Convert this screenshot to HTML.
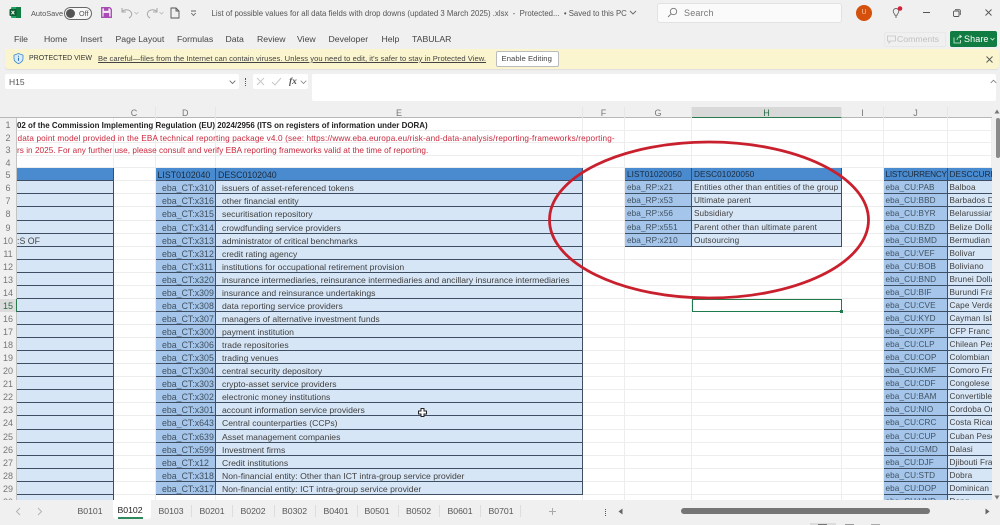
<!DOCTYPE html>
<html><head><meta charset="utf-8"><style>
*{box-sizing:border-box;margin:0;padding:0}
html,body{width:1000px;height:525px;overflow:hidden;background:#f0f0f0;font-family:"Liberation Sans",sans-serif}
#p{position:relative;width:1000px;height:525px;overflow:hidden;background:#f0f0f0;filter:blur(.35px)}
.t{position:absolute;white-space:nowrap;font-size:8.7px;color:#444;line-height:12px}
.box{position:absolute;background:#fff}
#ch{position:absolute;left:0;top:107px;width:991.5px;height:11.3px;background:#f0f0f0;border-bottom:1px solid #b8b8b8}
#ch span{position:absolute;top:0;height:11px;font-size:9px;line-height:12px;text-align:center;color:#777;border-right:1px solid #e6e6e6}
#sheet{position:absolute;left:0;top:118.3px;width:991.5px;height:382px;overflow:hidden;background:#fff}
.r{display:grid;grid-template-columns:17px 96.5px 42px 60.5px 367px 42px 67px 150px 42px 64px 43.5px;height:13.07px}
.r.s{height:12.5px}
.r>*{font-style:normal;text-decoration:none;display:block;overflow:hidden;white-space:nowrap;font-size:8.8px;line-height:14px;color:#444;border-right:1px solid #ededed;border-bottom:1px solid #ededed}
.r>u{background:#f0f0f0;text-align:center;color:#777;font-size:9px;border-right:1px solid #c4c4c4;border-bottom:0}
.r>.l{background:#d7e6f6;border-right:1px solid #3f4f63;border-bottom:1px solid #3f4f63}
.r>.d{background:#a5c6ea;border-right:1px solid #3f4f63;border-bottom:1px solid #3f4f63;padding-left:6.5px;color:#405060}
.r>.e{background:#d7e6f6;border-right:1px solid #3f4f63;border-bottom:1px solid #3f4f63;padding-left:6px;color:#404040;font-size:8.65px}
.r>.h{background:#4a8bd0;border-right:1px solid #3f4f63;border-bottom:1px solid #3f4f63;padding-left:2px;color:#1c2a3a}
.r>.g{padding-left:2px;font-size:8.2px;letter-spacing:.1px}
.r>.k{padding-left:1.5px;font-size:8.2px;letter-spacing:.1px;border-right:0}
.r>.h.j{padding-left:1.5px;letter-spacing:-.2px}
.r>.j{padding-left:1.5px}
.tab{position:absolute;top:504px;font-size:8.7px;line-height:14px;color:#555;width:40px;text-align:center}
svg{position:absolute;overflow:visible}
</style></head><body><div id="p">

<!-- title bar -->
<svg style="left:9px;top:6px" width="13" height="13" viewBox="0 0 13 13"><rect x="2" y="1" width="10" height="11" rx="1" fill="#21a366"/><rect x="7" y="1" width="5" height="11" fill="#107c41"/><rect x="0.5" y="3" width="7" height="7" rx="1" fill="#0e5c2f"/><path d="M2.4 4.8l3 3.5M5.4 4.8l-3 3.5" stroke="#fff" stroke-width="1"/></svg>
<div class="t" style="left:31px;top:7.5px;font-size:7.4px;color:#555">AutoSave</div>
<div style="position:absolute;left:64px;top:6.5px;width:28px;height:13px;border:1px solid #666;border-radius:7px;background:#f7f7f7"></div>
<div style="position:absolute;left:66px;top:8.5px;width:9px;height:9px;border-radius:50%;background:#555"></div>
<div class="t" style="left:79px;top:7.5px;font-size:7.2px;color:#555">Off</div>
<svg style="left:101px;top:7px" width="11" height="11" viewBox="0 0 11 11"><path d="M.7.7h8l1.6 1.6v8H.7z" fill="#f3e5f5" stroke="#a94bb5" stroke-width="1.3"/><rect x="3" y="1" width="4.4" height="2.8" fill="#a94bb5"/><rect x="2.6" y="6" width="5.6" height="4" fill="#a94bb5"/></svg>
<svg style="left:120px;top:7px" width="14" height="12" viewBox="0 0 14 12" fill="none" stroke="#aaa" stroke-width="1.1"><path d="M2 1v4h4M2 5c2-3 8-3 9.500 1 .6 2-.6 4-2.500 5"/></svg>
<svg style="left:134px;top:11px" width="5" height="4" viewBox="0 0 5 4"><path d="M.5 1l2 2 2-2" fill="none" stroke="#bbb" stroke-width=".8"/></svg>
<svg style="left:145px;top:7px" width="14" height="12" viewBox="0 0 14 12" fill="none" stroke="#aaa" stroke-width="1.1"><path d="M12 1v4H8M12 5C10 2 4 2 2.500 6c-.6 2 .6 4 2.500 5"/></svg>
<svg style="left:159px;top:11px" width="5" height="4" viewBox="0 0 5 4"><path d="M.5 1l2 2 2-2" fill="none" stroke="#bbb" stroke-width=".8"/></svg>
<svg style="left:170px;top:7px" width="10" height="12" viewBox="0 0 10 12" fill="none" stroke="#555" stroke-width=".9"><path d="M1 1h5l3 3v7H1zM6 1v3h3"/></svg>
<svg style="left:190px;top:10px" width="7" height="7" viewBox="0 0 7 7" fill="none" stroke="#666" stroke-width=".9"><path d="M1 1h5M1.300 3l2.200 2.500L5.700 3"/></svg>
<div class="t" style="left:211.500px;top:7.500px;font-size:7.8px;color:#555">List of possible values for all data fields with drop downs (updated 3 March 2025) .xlsx&nbsp; -&nbsp; Protected...&nbsp; • Saved to this PC</div>
<svg style="left:629px;top:10px" width="8" height="6" viewBox="0 0 8 6"><path d="M1 1l3 3 3-3" fill="none" stroke="#666" stroke-width=".9"/></svg>

<div class="box" style="left:657px;top:3px;width:185px;height:20px;border:1px solid #e2e2e2;border-radius:3px;background:#fafafa"></div>
<svg style="left:667px;top:7px" width="11" height="11" viewBox="0 0 11 11" fill="none" stroke="#777" stroke-width=".9"><circle cx="6.500" cy="4.500" r="3.200"/><path d="M4.200 6.800L1 10"/></svg>
<div class="t" style="left:684px;top:6.500px;font-size:9px;color:#777;letter-spacing:.2px">Search</div>
<div style="position:absolute;left:856px;top:5px;width:16px;height:16px;border-radius:50%;background:#d4500c;color:#f6c8a8;font-size:7px;line-height:16px;text-align:center">U</div>
<svg style="left:890px;top:6px" width="14" height="14" viewBox="0 0 14 14" fill="none" stroke="#666" stroke-width=".9"><path d="M5 11h2M5 9.300h2c0-1.500 1.800-2 1.800-4a2.800 2.800 0 0 0-5.600 0c0 2 1.800 2.500 1.800 4z"/><circle cx="10" cy="2.500" r="2.300" fill="#d6203a" stroke="none"/></svg>
<div style="position:absolute;left:923px;top:12px;width:7px;height:1px;background:#555"></div>
<svg style="left:953px;top:9px" width="8" height="8" viewBox="0 0 8 8" fill="none" stroke="#555" stroke-width=".9"><rect x=".5" y="2" width="5.500" height="5.500" rx="1"/><path d="M2 .7h4.300c.6 0 1 .4 1 1V6"/></svg>
<svg style="left:985px;top:9px" width="7" height="7" viewBox="0 0 7 7"><path d="M.5.5l6 6M6.500.5l-6 6" stroke="#555" stroke-width=".9"/></svg>

<!-- menu -->
<div class="t" style="left:14px;top:33px">File</div>
<div class="t" style="left:44px;top:33px">Home</div>
<div class="t" style="left:80.500px;top:33px">Insert</div>
<div class="t" style="left:115.500px;top:33px">Page Layout</div>
<div class="t" style="left:177px;top:33px">Formulas</div>
<div class="t" style="left:225.500px;top:33px">Data</div>
<div class="t" style="left:257px;top:33px">Review</div>
<div class="t" style="left:297px;top:33px">View</div>
<div class="t" style="left:328.500px;top:33px">Developer</div>
<div class="t" style="left:381.500px;top:33px">Help</div>
<div class="t" style="left:412px;top:33px">TABULAR</div>
<div style="position:absolute;left:884px;top:32px;width:62px;height:15px;border:1px solid #e8e8e8;border-radius:2px"></div>
<svg style="left:887px;top:35px" width="9" height="9" viewBox="0 0 9 9"><path d="M.5 1h8v5H3.500L2 8V6H.5z" fill="none" stroke="#c4c4c4" stroke-width=".8"/></svg>
<div class="t" style="left:897px;top:33px;color:#c0c0c0">Comments</div>
<div style="position:absolute;left:950px;top:31px;width:47px;height:16px;background:#107c41;border-radius:2px"></div>
<svg style="left:953px;top:34px" width="10" height="10" viewBox="0 0 10 10" fill="none" stroke="#d8efe2" stroke-width=".8"><path d="M1 3.500V9h6.500V6M4 6c0-2 1.500-3.500 4-3.500M6.500 1L8.500 2.500 6.500 4"/></svg>
<div class="t" style="left:964px;top:33px;color:#fff;font-size:9px;letter-spacing:.1px">Share</div>
<svg style="left:990px;top:37px" width="5" height="4" viewBox="0 0 5 4"><path d="M.5 1l2 2 2-2" fill="none" stroke="#e4f3ea" stroke-width=".8"/></svg>

<!-- protected view -->
<div style="position:absolute;left:5px;top:49px;width:994px;height:20px;background:#fbf5cf;border-radius:3px;box-shadow:0 1px 1px #ddd"></div>
<svg style="left:13px;top:53px" width="11" height="11" viewBox="0 0 11 11"><path d="M5.500.5l4.500 1.600v3.500c0 2.500-2 4-4.500 5-2.500-1-4.500-2.500-4.500-5V2.100z" fill="#d9ecfa" stroke="#3a86c8" stroke-width=".8"/><path d="M5.500 2.800v.9M5.500 4.800v3" stroke="#2a6da8" stroke-width="1"/></svg>
<div class="t" style="left:29px;top:53px;font-size:7px;color:#333">PROTECTED VIEW</div>
<div class="t" style="left:98px;top:53px;font-size:7.6px;color:#444;text-decoration:underline;letter-spacing:.04px">Be careful—files from the Internet can contain viruses. Unless you need to edit, it's safer to stay in Protected View.</div>
<div style="position:absolute;left:496px;top:50.500px;width:63px;height:16px;background:#fff;border:1px solid #bbb;border-radius:2px"></div>
<div class="t" style="left:501.500px;top:53px;font-size:7.7px;color:#444;letter-spacing:.06px">Enable Editing</div>
<svg style="left:986px;top:56px" width="7" height="7" viewBox="0 0 7 7"><path d="M.5.5l6 6M6.500.5l-6 6" stroke="#555" stroke-width=".9"/></svg>

<!-- formula bar -->
<div class="box" style="left:5px;top:74px;width:234px;height:15px;border-radius:2px"></div>
<div class="t" style="left:9px;top:76px;font-size:8.500px;color:#555">H15</div>
<svg style="left:229px;top:80px" width="7" height="5" viewBox="0 0 7 5"><path d="M.7.7l2.800 2.800L6.300.7" fill="none" stroke="#666" stroke-width=".8"/></svg>
<div style="position:absolute;left:245px;top:78px;width:1.500px;height:8px;border-left:1.500px dotted #555"></div>
<div class="box" style="left:253px;top:74px;width:55px;height:15px;border-radius:2px"></div>
<svg style="left:256px;top:77px" width="9" height="9" viewBox="0 0 9 9"><path d="M1 1l7 7M8 1L1 8" stroke="#c8c8c8"/></svg>
<svg style="left:271px;top:77px" width="11" height="9" viewBox="0 0 11 9"><path d="M1 5l3 3 6-7" fill="none" stroke="#c8c8c8"/></svg>
<div class="t" style="left:289px;top:75.500px;font:italic bold 9.500px/12px 'Liberation Serif',serif;color:#555">fx</div>
<svg style="left:300px;top:80px" width="7" height="5" viewBox="0 0 7 5"><path d="M.7.7l2.800 2.800L6.300.7" fill="none" stroke="#888" stroke-width=".8"/></svg>
<div class="box" style="left:312px;top:74px;width:684px;height:27px;border-radius:2px"></div>
<svg style="left:990px;top:79px" width="7" height="5" viewBox="0 0 7 5"><path d="M.7 4L3.500 1.200 6.300 4" fill="none" stroke="#777" stroke-width=".8"/></svg>

<!-- column headers -->
<div id="ch">
<span style="left:113.500px;width:42px">C</span>
<span style="left:155.500px;width:60.500px">D</span>
<span style="left:216px;width:367px">E</span>
<span style="left:583px;width:42px">F</span>
<span style="left:625px;width:67px">G</span>
<span style="left:692px;width:150px;background:#d9d9d9;color:#2a6b47;height:11.300px;border-bottom:1px solid #2a7a50">H</span>
<span style="left:842px;width:42px">I</span>
<span style="left:884px;width:64px">J</span>
</div>

<!-- sheet -->
<div id="sheet">
<div class="r s"><u>1</u><i></i><i></i><i></i><i></i><i></i><i></i><i></i><i></i><i></i><i></i></div>
<div class="r s"><u>2</u><i></i><i></i><i></i><i></i><i></i><i></i><i></i><i></i><i></i><i></i></div>
<div class="r s"><u>3</u><i></i><i></i><i></i><i></i><i></i><i></i><i></i><i></i><i></i><i></i></div>
<div class="r s"><u>4</u><i></i><i></i><i></i><i></i><i></i><i></i><i></i><i></i><i></i><i></i></div>
<div class="r"><u>5</u><i class="h"></i><i></i><i class="h">LIST0102040</i><i class="h">DESC0102040</i><i></i><i class="h g">LIST01020050</i><i class="h g">DESC01020050</i><i></i><i class="h g j">LISTCURRENCY</i><i class="h k">DESCCURRENCY</i></div>
<div class="r"><u>6</u><i class="l"></i><i></i><i class="d">eba_CT:x310</i><i class="e">issuers of asset-referenced tokens</i><i></i><i class="d g">eba_RP:x21</i><i class="e g">Entities other than entities of the group</i><i></i><i class="d g j">eba_CU:PAB</i><i class="e k">Balboa</i></div>
<div class="r"><u>7</u><i class="l"></i><i></i><i class="d">eba_CT:x316</i><i class="e">other financial entity</i><i></i><i class="d g">eba_RP:x53</i><i class="e g">Ultimate parent</i><i></i><i class="d g j">eba_CU:BBD</i><i class="e k">Barbados Dollar</i></div>
<div class="r"><u>8</u><i class="l"></i><i></i><i class="d">eba_CT:x315</i><i class="e">securitisation repository</i><i></i><i class="d g">eba_RP:x56</i><i class="e g">Subsidiary</i><i></i><i class="d g j">eba_CU:BYR</i><i class="e k">Belarussian Ruble</i></div>
<div class="r"><u>9</u><i class="l"></i><i></i><i class="d">eba_CT:x314</i><i class="e">crowdfunding service providers</i><i></i><i class="d g">eba_RP:x551</i><i class="e g">Parent other than ultimate parent</i><i></i><i class="d g j">eba_CU:BZD</i><i class="e k">Belize Dollar</i></div>
<div class="r"><u>10</u><i class="l">:S OF</i><i></i><i class="d">eba_CT:x313</i><i class="e">administrator of critical benchmarks</i><i></i><i class="d g">eba_RP:x210</i><i class="e g">Outsourcing</i><i></i><i class="d g j">eba_CU:BMD</i><i class="e k">Bermudian Dollar</i></div>
<div class="r"><u>11</u><i class="l"></i><i></i><i class="d">eba_CT:x312</i><i class="e">credit rating agency</i><i></i><i></i><i></i><i></i><i class="d g j">eba_CU:VEF</i><i class="e k">Bolivar</i></div>
<div class="r"><u>12</u><i class="l"></i><i></i><i class="d">eba_CT:x311</i><i class="e">institutions for occupational retirement provision</i><i></i><i></i><i></i><i></i><i class="d g j">eba_CU:BOB</i><i class="e k">Boliviano</i></div>
<div class="r"><u>13</u><i class="l"></i><i></i><i class="d">eba_CT:x320</i><i class="e">insurance intermediaries, reinsurance intermediaries and ancillary insurance intermediaries</i><i></i><i></i><i></i><i></i><i class="d g j">eba_CU:BND</i><i class="e k">Brunei Dollar</i></div>
<div class="r"><u>14</u><i class="l"></i><i></i><i class="d">eba_CT:x309</i><i class="e">insurance and reinsurance undertakings</i><i></i><i></i><i></i><i></i><i class="d g j">eba_CU:BIF</i><i class="e k">Burundi Franc</i></div>
<div class="r"><u style="background:#dcdcdc;color:#2a6b47;border-right:1px solid #2a7a50">15</u><i class="l"></i><i></i><i class="d">eba_CT:x308</i><i class="e">data reporting service providers</i><i></i><i></i><i style="border:1px solid #1f7a4c"></i><i></i><i class="d g j">eba_CU:CVE</i><i class="e k">Cape Verde Escudo</i></div>
<div class="r"><u>16</u><i class="l"></i><i></i><i class="d">eba_CT:x307</i><i class="e">managers of alternative investment funds</i><i></i><i></i><i></i><i></i><i class="d g j">eba_CU:KYD</i><i class="e k">Cayman Islands Dollar</i></div>
<div class="r"><u>17</u><i class="l"></i><i></i><i class="d">eba_CT:x300</i><i class="e">payment institution</i><i></i><i></i><i></i><i></i><i class="d g j">eba_CU:XPF</i><i class="e k">CFP Franc</i></div>
<div class="r"><u>18</u><i class="l"></i><i></i><i class="d">eba_CT:x306</i><i class="e">trade repositories</i><i></i><i></i><i></i><i></i><i class="d g j">eba_CU:CLP</i><i class="e k">Chilean Peso</i></div>
<div class="r"><u>19</u><i class="l"></i><i></i><i class="d">eba_CT:x305</i><i class="e">trading venues</i><i></i><i></i><i></i><i></i><i class="d g j">eba_CU:COP</i><i class="e k">Colombian Peso</i></div>
<div class="r"><u>20</u><i class="l"></i><i></i><i class="d">eba_CT:x304</i><i class="e">central security depository</i><i></i><i></i><i></i><i></i><i class="d g j">eba_CU:KMF</i><i class="e k">Comoro Franc</i></div>
<div class="r"><u>21</u><i class="l"></i><i></i><i class="d">eba_CT:x303</i><i class="e">crypto-asset service providers</i><i></i><i></i><i></i><i></i><i class="d g j">eba_CU:CDF</i><i class="e k">Congolese Franc</i></div>
<div class="r"><u>22</u><i class="l"></i><i></i><i class="d">eba_CT:x302</i><i class="e">electronic money institutions</i><i></i><i></i><i></i><i></i><i class="d g j">eba_CU:BAM</i><i class="e k">Convertible Mark</i></div>
<div class="r"><u>23</u><i class="l"></i><i></i><i class="d">eba_CT:x301</i><i class="e">account information service providers</i><i></i><i></i><i></i><i></i><i class="d g j">eba_CU:NIO</i><i class="e k">Cordoba Oro</i></div>
<div class="r"><u>24</u><i class="l"></i><i></i><i class="d">eba_CT:x643</i><i class="e">Central counterparties (CCPs)</i><i></i><i></i><i></i><i></i><i class="d g j">eba_CU:CRC</i><i class="e k">Costa Rican Colon</i></div>
<div class="r"><u>25</u><i class="l"></i><i></i><i class="d">eba_CT:x639</i><i class="e">Asset management companies</i><i></i><i></i><i></i><i></i><i class="d g j">eba_CU:CUP</i><i class="e k">Cuban Peso</i></div>
<div class="r"><u>26</u><i class="l"></i><i></i><i class="d">eba_CT:x599</i><i class="e">Investment firms</i><i></i><i></i><i></i><i></i><i class="d g j">eba_CU:GMD</i><i class="e k">Dalasi</i></div>
<div class="r"><u>27</u><i class="l"></i><i></i><i class="d">eba_CT:x12</i><i class="e">Credit institutions</i><i></i><i></i><i></i><i></i><i class="d g j">eba_CU:DJF</i><i class="e k">Djibouti Franc</i></div>
<div class="r"><u>28</u><i class="l"></i><i></i><i class="d">eba_CT:x318</i><i class="e">Non-financial entity: Other than ICT intra-group service provider</i><i></i><i></i><i></i><i></i><i class="d g j">eba_CU:STD</i><i class="e k">Dobra</i></div>
<div class="r"><u>29</u><i class="l"></i><i></i><i class="d">eba_CT:x317</i><i class="e">Non-financial entity: ICT intra-group service provider</i><i></i><i></i><i></i><i></i><i class="d g j">eba_CU:DOP</i><i class="e k">Dominican Peso</i></div>
<div class="r"><u>30</u><i class="l"></i><i></i><i></i><i></i><i></i><i></i><i></i><i></i><i class="d g j">eba_CU:VND</i><i class="e k">Dong</i></div>

<div class="t" style="left:17px;top:2px;font-size:7.95px;font-weight:bold;color:#222">02 of the Commission Implementing Regulation (EU) 2024/2956 (ITS on registers of information under DORA)</div>
<div class="t" style="left:17.500px;top:14.500px;font-size:8.200px;color:#c8283c;letter-spacing:.15px">data point model provided in the EBA technical reporting package v4.0 (see: https://www.eba.europa.eu/risk-and-data-analysis/reporting-frameworks/reporting-</div>
<div class="t" style="left:17px;top:27px;font-size:8.200px;color:#c8283c;letter-spacing:.035px">rs in 2025. For any further use, please consult and verify EBA reporting frameworks valid at the time of reporting.</div>
<div style="position:absolute;left:839.500px;top:191.500px;width:3px;height:3px;background:#1f7a4c"></div>
</div>

<!-- vertical scrollbar -->
<div style="position:absolute;left:991.500px;top:107px;width:8.500px;height:393px;background:#f0f0f0"></div>
<svg style="left:994px;top:109px" width="6" height="5" viewBox="0 0 6 5"><path d="M3 .5L5.500 4.500H.5z" fill="#777"/></svg>
<div style="position:absolute;left:995.500px;top:118px;width:4.500px;height:40px;background:#8a8a8a;border-radius:2px"></div>
<svg style="left:994px;top:495px" width="6" height="5" viewBox="0 0 6 5"><path d="M3 4.500L5.500 .5H.5z" fill="#777"/></svg>

<!-- tabs -->
<svg style="left:15px;top:507px" width="6" height="9" viewBox="0 0 6 9"><path d="M5 1L1.500 4.500 5 8" fill="none" stroke="#b4b4b4"/></svg>
<svg style="left:37px;top:507px" width="6" height="9" viewBox="0 0 6 9"><path d="M1 1l3.500 3.500L1 8" fill="none" stroke="#b4b4b4"/></svg>
<div style="position:absolute;left:113px;top:500px;width:38px;height:19px;background:#fff;border-radius:0 0 3px 3px"></div>
<div style="position:absolute;left:118px;top:517px;width:25px;height:1.500px;background:#2d8a5c"></div>
<div class="tab" style="left:70px">B0101</div>
<div class="tab" style="left:110px;top:502.500px;color:#222">B0102</div>
<div class="tab" style="left:151px">B0103</div>
<div class="tab" style="left:192px">B0201</div>
<div class="tab" style="left:233px">B0202</div>
<div class="tab" style="left:274.500px">B0302</div>
<div class="tab" style="left:316px">B0401</div>
<div class="tab" style="left:357px">B0501</div>
<div class="tab" style="left:398.500px">B0502</div>
<div class="tab" style="left:440px">B0601</div>
<div class="tab" style="left:481px">B0701</div>
<div style="position:absolute;left:191px;top:505px;width:1px;height:12px;background:#ddd"></div>
<div style="position:absolute;left:232px;top:505px;width:1px;height:12px;background:#ddd"></div>
<div style="position:absolute;left:274px;top:505px;width:1px;height:12px;background:#ddd"></div>
<div style="position:absolute;left:315px;top:505px;width:1px;height:12px;background:#ddd"></div>
<div style="position:absolute;left:357px;top:505px;width:1px;height:12px;background:#ddd"></div>
<div style="position:absolute;left:398px;top:505px;width:1px;height:12px;background:#ddd"></div>
<div style="position:absolute;left:439px;top:505px;width:1px;height:12px;background:#ddd"></div>
<div style="position:absolute;left:480px;top:505px;width:1px;height:12px;background:#ddd"></div>
<div style="position:absolute;left:520px;top:505px;width:1px;height:12px;background:#ddd"></div>
<svg style="left:548px;top:507px" width="9" height="9" viewBox="0 0 9 9"><path d="M4.500 1v7M1 4.500h7" stroke="#aaa"/></svg>
<div style="position:absolute;left:604.500px;top:508.500px;width:1.500px;height:7px;border-left:1.500px dotted #555"></div>
<svg style="left:618px;top:508px" width="5" height="7" viewBox="0 0 5 7"><path d="M.5 3.500L4.500.5v6z" fill="#666"/></svg>
<div style="position:absolute;left:681px;top:508px;width:249px;height:6px;background:#757575;border-radius:3px"></div>
<svg style="left:985px;top:508px" width="5" height="7" viewBox="0 0 5 7"><path d="M4.500 3.500L.5.500v6z" fill="#666"/></svg>
<div style="position:absolute;left:810px;top:523px;width:26px;height:2px;background:#dcdcdc"></div>
<div style="position:absolute;left:818px;top:524px;width:9px;height:1px;background:#777"></div>
<div style="position:absolute;left:845px;top:524px;width:9px;height:1px;background:#999"></div>
<div style="position:absolute;left:871px;top:524px;width:9px;height:1px;background:#aaa"></div>

<!-- ellipse and cursor -->
<svg style="left:0;top:0" width="1000" height="525" viewBox="0 0 1000 525"><ellipse cx="709" cy="220" rx="159.500" ry="78" fill="none" stroke="#c9202e" stroke-width="2.800"/></svg>
<svg style="left:418px;top:408px" width="9" height="9" viewBox="0 0 9 9"><path d="M3 .5h3v2.500h2.500v3H6v2.500H3V6H.5V3H3z" fill="#fff" stroke="#222" stroke-width="1"/></svg>
</div></body></html>
